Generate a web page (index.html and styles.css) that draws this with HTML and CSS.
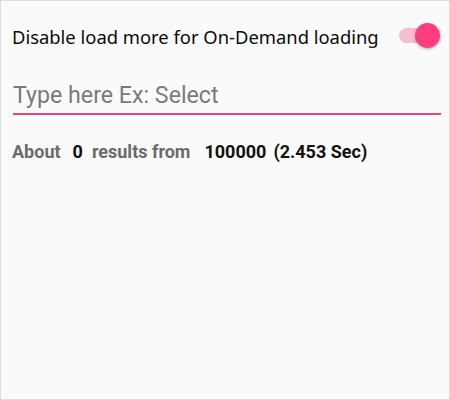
FILE: index.html
```html
<!DOCTYPE html>
<html>
<head>
<meta charset="utf-8">
<link rel="stylesheet" href="styles.css">
</head>
<body>
<div class="frame">
  <div class="row">
    <span class="label">Disable load more for On-Demand loading</span>
    <span class="switch"><span class="track"></span><span class="thumb"></span></span>
  </div>
  <div class="field">
    <input class="input" type="text" placeholder="Type here Ex: Select">
  </div>
  <div class="stats">
    <span class="muted">About</span>
    <span class="strong zero">0</span>
    <span class="muted results">results from</span>
    <span class="strong total">100000</span>
    <span class="strong time">(2.453 Sec)</span>
  </div>
</div>
</body>
</html>
```
FILE: styles.css
```css
html, body {
  margin: 0;
  padding: 0;
}
body {
  width: 450px;
  height: 400px;
  background: #fafafa;
}
.frame {
  box-sizing: border-box;
  width: 450px;
  height: 400px;
  border: 1px solid #dcdcdc;
  background: #fafafa;
  padding: 0 10px 0 11px;
}
.row {
  display: flex;
  align-items: center;
  justify-content: space-between;
  height: 36px;
  margin-top: 17px;
}
.label {
  font-family: "Noto Sans", sans-serif;
  font-size: 18.4px;
  color: #0a0a0a;
}
.switch {
  position: relative;
  width: 44px;
  height: 27px;
}
.track {
  position: absolute;
  left: 4px;
  top: 5px;
  width: 38px;
  height: 15px;
  border-radius: 8px;
  background: #f9bcd1;
}
.thumb {
  position: absolute;
  left: 20px;
  top: 0;
  width: 25px;
  height: 25px;
  border-radius: 50%;
  background: #ff3d7f;
  box-shadow: 0 1px 3px rgba(0,0,0,0.3);
}
.field {
  margin-top: 26px;
  padding-left: 1px;
}
.input {
  box-sizing: border-box;
  width: 428px;
  height: 35px;
  border: 0;
  border-bottom: 2px solid #ec407a;
  background: transparent;
  outline: none;
  padding: 0 0 4px 0;
  font-family: Roboto, sans-serif;
  font-size: 23.2px;
}
.input::placeholder {
  color: #7a7a7a;
}
.stats {
  display: flex;
  margin-top: 26px;
  font-family: Roboto, sans-serif;
  font-weight: bold;
  font-size: 18px;
}
.muted { color: #6b6b6b; }
.strong { color: #111; }
.zero { margin-left: 12px; }
.results { margin-left: 9px; }
.total { margin-left: 14px; }
.time { margin-left: 7px; }
```
